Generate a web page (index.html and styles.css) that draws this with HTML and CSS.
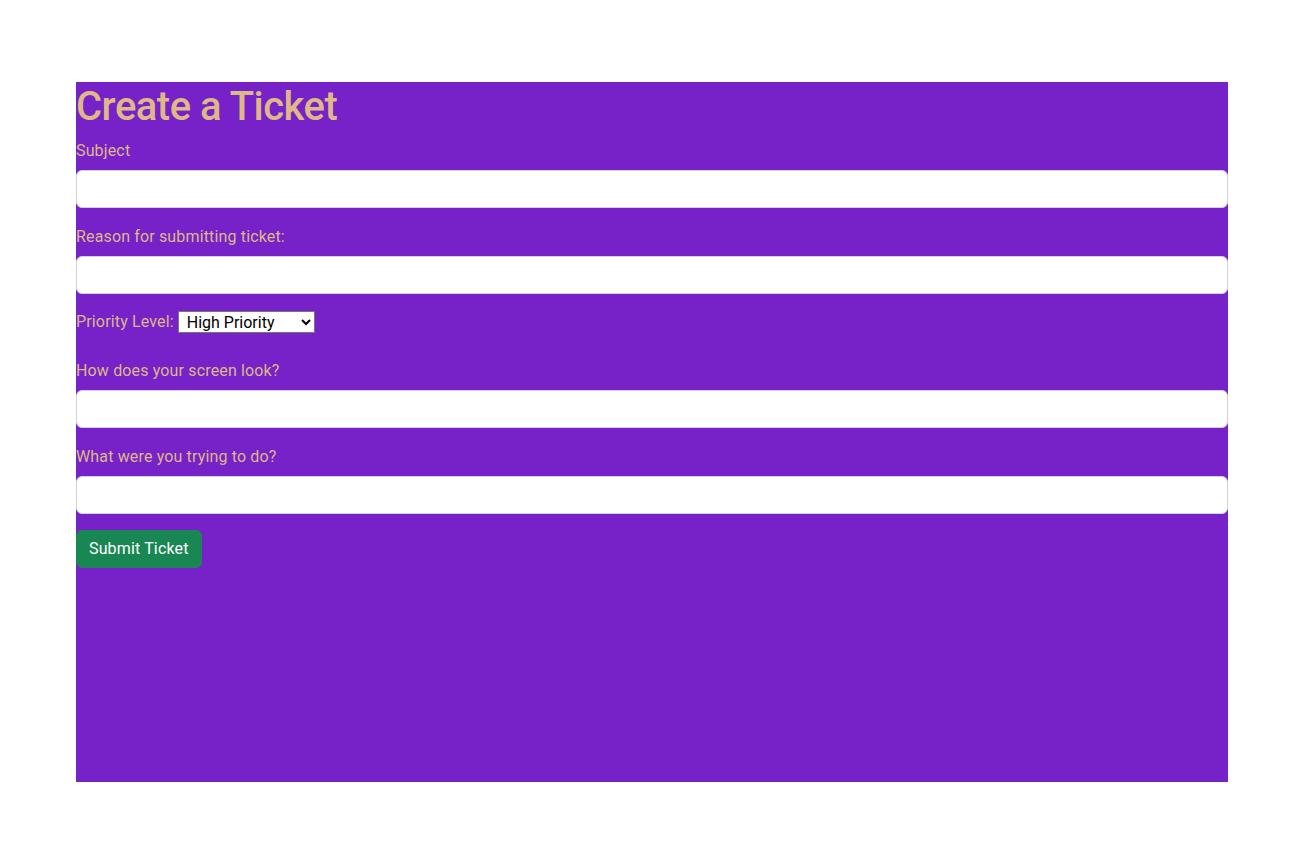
FILE: index.html
```html
<!DOCTYPE html>
<html lang="en">
<head>
<meta charset="utf-8">
<title>Create a Ticket</title>
<link rel="stylesheet" href="styles.css">
</head>
<body>
<div class="panel">
  <h1 class="title">Create a Ticket</h1>
  <form class="form">
    <div class="field">
      <label class="label" for="subject">Subject</label>
      <input class="control" id="subject" type="text">
    </div>
    <div class="field">
      <label class="label" for="reason">Reason for submitting ticket:</label>
      <input class="control" id="reason" type="text">
    </div>
    <div class="priority">
      <label class="label-inline" for="priority">Priority Level:</label>
      <select class="select" id="priority">
        <option>High Priority</option>
        <option>Medium Priority</option>
        <option>Low Priority</option>
      </select>
    </div>
    <div class="field">
      <label class="label" for="screen">How does your screen look?</label>
      <input class="control" id="screen" type="text">
    </div>
    <div class="field">
      <label class="label" for="trying">What were you trying to do?</label>
      <input class="control" id="trying" type="text">
    </div>
    <button class="btn-submit" type="button">Submit Ticket</button>
  </form>
</div>
</body>
</html>
```

FILE: styles.css
```css
* { box-sizing: border-box; }
html, body {
  margin: 0;
  padding: 0;
  background: #ffffff;
  font-family: Roboto, "Liberation Sans", Arial, sans-serif;
  font-size: 16px;
  line-height: 1.5;
}
.panel {
  width: 1152px;
  height: 700px;
  margin: 82px 0 0 76px;
  background: #7622c8;
}
.title {
  margin: 0 0 8px 0;
  padding-top: 1px;
  height: 48px;
  font-size: 40px;
  font-weight: 500;
  line-height: 1.2;
  color: #deb887;
  letter-spacing: -0.5px;
}
.form {
  display: flex;
  flex-direction: column;
  align-items: flex-start;
}
.field {
  width: 100%;
  margin-bottom: 16px;
}
.label {
  display: block;
  height: 24px;
  margin-bottom: 8px;
  padding-top: 1px;
  color: #deb887;
  font-size: 16px;
  line-height: 24px;
  letter-spacing: 0.15px;
}
.control {
  display: block;
  width: 100%;
  height: 38px;
  padding: 6px 12px;
  border: 1px solid #ced4da;
  border-radius: 6px;
  background: #ffffff;
  font: inherit;
}
.priority {
  display: flex;
  align-items: center;
  gap: 4px;
  height: 24px;
  margin-bottom: 24px;
}
.label-inline {
  color: #deb887;
  font-size: 16px;
  line-height: 24px;
  letter-spacing: 0.15px;
}
.select {
  width: 137px;
  height: 22px;
  padding: 0 2px 0 4px;
  border: 1px solid #767676;
  border-radius: 0;
  background: #ffffff;
  color: #000000;
  font-family: inherit;
  font-size: 16px;
}
.btn-submit {
  height: 38px;
  padding: 6px 12px;
  border: 1px solid #198754;
  border-radius: 6px;
  background: #198754;
  color: #ffffff;
  font-family: inherit;
  font-size: 16px;
  line-height: 24px;
  letter-spacing: 0.15px;
  cursor: pointer;
}
```
